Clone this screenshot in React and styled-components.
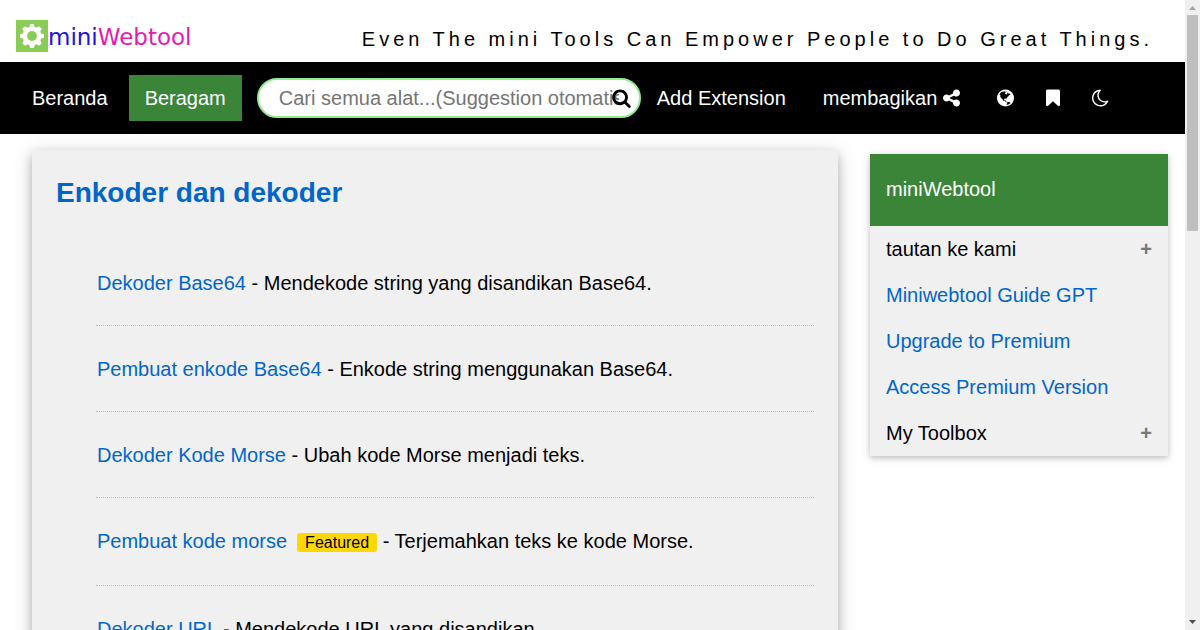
import styled, { createGlobalStyle } from "styled-components";

/* ── icons ── */
const icons = {
  search: {
    left: 64,
    units: 1664,
    width: 19,
    d: "M1216 832q0-185-131.5-316.5t-316.5-131.5-316.5 131.5-131.5 316.5 131.5 316.5 316.5 131.5 316.5-131.5 131.5-316.5zm512 832q0 52-38 90t-90 38q-54 0-90-38l-343-342q-179 124-399 124-143 0-273.5-55.5t-225-150-150-225-55.5-273.5 55.5-273.5 150-225 225-150 273.5-55.5 273.5 55.5 225 150 150 225 55.5 273.5q0 220-124 399l343 343q37 37 37 90z",
  },
  share: {
    left: 128,
    units: 1536,
    width: 17,
    d: "M1344 1024q133 0 226.5 93.5t93.5 226.5-93.5 226.5-226.5 93.5-226.5-93.5-93.5-226.5q0-12 2-34l-360-180q-92 86-218 86-133 0-226.5-93.5t-93.5-226.5 93.5-226.5 226.5-93.5q126 0 218 86l360-180q-2-22-2-34 0-133 93.5-226.5t226.5-93.5 226.5 93.5 93.5 226.5-93.5 226.5-226.5 93.5q-126 0-218-86l-360 180q2 22 2 34t-2 34l360 180q92-86 218-86z",
  },
  bookmark: {
    left: 256,
    units: 1280,
    width: 14,
    d: "M1420 128q23 0 44 9 33 13 52.5 41t19.5 62v1289q0 34-19.5 62t-52.5 41q-19 8-44 8-48 0-83-32l-441-424-441 424q-36 33-83 33-23 0-44-9-33-13-52.5-41t-19.5-62v-1289q0-34 19.5-62t52.5-41q21-9 44-9h1048z",
  },
  moon: {
    left: 128,
    units: 1536,
    width: 17,
    d: "M1390 1303q-54 9-110 9-182 0-337-90t-245-245-90-337q0-192 104-357-201 60-328.5 229t-127.5 384q0 130 51 248.5t136.5 204 204 136.5 248.5 51q144 0 273.5-61.5t220.5-171.5zm203-85q-94 203-283.5 324.5t-413.5 121.5q-156 0-298-61t-245-164-164-245-61-298q0-153 57.5-292.5t156-241.5 235.5-164.5 290-68.5q44-2 61 39 18 41-15 72-86 78-131.5 181.5t-45.5 218.5q0 148 73 273t198 198 273 73q118 0 228-51 41-18 72 13 14 14 17.5 34t-4.5 38z",
  },
  globe: {
    left: 128,
    units: 1536,
    width: 17,
    d: "M896 128q209 0 385.5 103t279.5 279.5 103 385.5-103 385.5-279.5 279.5-385.5 103-385.5-103-279.5-279.5-103-385.5 103-385.5 279.5-279.5 385.5-103zm274 521q-2 1-9.5 9.5t-13.5 9.5q2 0 4.5-5t5-11 3.5-7q6-7 22-15 14-6 52-12 34-8 51 11-2-2 9.5-13t14.5-12q3-2 15-4.5t15-7.5l2-22q-12 1-17.5-7t-6.5-21q0 2-6 8 0-7-4.5-8t-11.5 1-9 1q-10-3-15-7.5t-8-16.5-4-15q-2-5-9.5-11t-9.5-10q-1-2-2.5-5.5t-3-6.5-4-5.5-5.5-2.5-7 5-7.5 10-4.5 5q-3-2-6-1.5t-4.5 1-4.5 3-5 3.5q-3 2-8.5 3t-8.5 2q15-5-1-11-10-4-16-3 9-4 7.5-12t-8.5-14h5q-1-4-8.5-8.5t-17.5-8.5-13-6q-8-5-34-9.5t-33-.5q-5 6-4.5 10.5t4 14 3.5 12.5q1 6-5.5 13t-6.5 12q0 7 14 15.5t10 21.5q-3 8-16 16t-16 12q-5 8-1.5 18.5t10.5 16.5q2 2 1.5 4t-3.5 4.5-5.5 4-6.5 3.5l-3 2q-11 5-20.5-6t-13.5-26q-7-25-16-30-23-8-29 1-5-13-41-26-25-9-58-4 6-1 0-15-7-15-19-12 3-6 4-17.5t1-13.5q3-13 12-23 1-1 7-8.5t9.5-13.5.5-6q35 4 50-11 5-5 11.5-17t10.5-17q9-6 14-5.5t14.5 5.5 14.5 5q14 1 15.5-11t-7.5-20q12 1 3-17-4-7-8-9-12-4-27 5-8 4 2 8-1-1-9.5 10.5t-16.5 17.5-16-5q-1-1-5.5-13.5t-9.5-13.5q-8 0-16 15 3-8-11-15t-24-8q19-12-8-27-7-4-20.5-5t-19.5 4q-5 7-5.5 11.5t5 8 10.5 5.5 11.5 4 8.5 3q14 10 8 14-2 1-8.5 3.5t-11.5 4.5-6 4q-3 4 0 14t-2 14q-5-5-9-17.5t-7-16.5q7 9-25 6l-10-1q-4 0-16 2t-20.5 1-13.5-8q-4-8 0-20 1-4 4-2-4-3-11-9.5t-10-8.5q-46 15-94 41 6 1 12-1 5-2 13-6.5t10-5.5q34-14 42-7l5-5q14 16 20 25-7-4-30-1-20 6-22 12 7 12 5 18-4-3-11.5-10t-14.5-11-15-5q-16 0-22 1-146 80-235 222 7 7 12 8 4 1 5 9t2.5 11 11.5-3q9 8 3 19 1-1 44 27 19 17 21 21 3 11-10 18-1-2-9-9t-9-4q-3 5 .5 18.5t10.5 12.5q-7 0-9.5 16t-2.5 35.5-1 23.5l2 1q-3 12 5.5 34.5t21.5 19.5q-13 3 20 43 6 8 8 9 3 2 12 7.5t15 10 10 10.5q4 5 10 22.5t14 23.5q-2 6 9.5 20t10.5 23q-1 0-2.5 1t-2.5 1q3 7 15.5 14t15.5 13q1 3 2 10t3 11 8 2q2-20-24-62-15-25-17-29-3-5-5.5-15.5t-4.5-14.5q2 0 6 1.5t8.5 3.5 7.5 4 2 3q-3 7 2 17.5t12 18.5 17 19 12 13q6 6 14 19.5t0 13.5q9 0 20 10.5t17 19.5q5 8 8 26t5 24q2 7 8.5 13.5t12.5 9.5l16 8 13 7q5 2 18.5 10.5t21.5 11.5q10 4 16 4t14.5-2.5 13.5-3.5q15-2 29 15t21 21q36 19 55 11-2 1 .5 7.5t8 15.5 9 14.5 5.5 8.5q5 6 18 15t18 15q6-4 7-9-3 8 7 20t18 10q14-3 14-32-31 15-49-18 0-1-2.5-5.5t-4-8.5-2.5-8.5 0-7.5 5-3q9 0 10-3.5t-2-12.5-4-13q-1-8-11-20t-12-15q-5 9-16 8t-16-9q0 1-1.5 5.5t-1.5 6.5q-13 0-15-1 1-3 2.5-17.5t3.5-22.5q1-4 5.5-12t7.5-14.5 4-12.5-4.5-9.5-17.5-2.5q-19 1-26 20-1 3-3 10.5t-5 11.5-9 7q-7 3-24 2t-24-5q-13-8-22.5-29t-9.5-37q0-10 2.5-26.5t3-25-5.5-24.5q3-2 9-9.5t10-10.5q2-1 4.5-1.5t4.5 0 4-1.5 3-6q-1-1-4-3-3-3-4-3 7 3 28.5-1.5t27.5 1.5q15 11 22-2 0-1-2.5-9.5t-.5-13.5q5 27 29 9 3 3 15.5 5t17.5 5q3 2 7 5.5t5.5 4.5 5-.5 8.5-6.5q10 14 12 24 11 40 19 44 7 3 11 2t4.5-9.5 0-14-1.5-12.5l-1-8v-18l-1-8q-15-3-18.5-12t1.5-18.5 15-18.5q1-1 8-3.5t15.5-6.5 12.5-8q21-19 15-35 7 0 11-9-1 0-5-3t-7.5-5-4.5-2q9-5 2-16 5-3 7.5-11t7.5-10q9 12 21 2 7-8 1-16 5-7 20.5-10.5t18.5-9.5q7 2 8-2t1-12 3-12q4-5 15-9t13-5l17-11q3-4 0-4 18 2 31-11 10-11-6-20 3-6-3-9.5t-15-5.5q3-1 11.5-.5t10.5-1.5q15-10-7-16-17-5-43 12zm-163 877q206-36 351-189-3-3-12.5-4.5t-12.5-3.5q-18-7-24-8 1-7-2.5-13t-8-9-12.5-8-11-7q-2-2-7-6t-7-5.5-7.5-4.5-8.5-2-10 1l-3 1q-3 1-5.5 2.5t-5.5 3-4 3 0 2.5q-21-17-36-22-5-1-11-5.5t-10.5-7-10-1.5-11.5 7q-5 5-6 15t-2 13q-7-5 0-17.5t2-18.5q-3-6-10.5-4.5t-12 4.5-11.5 8.5-9 6.5-8.5 5.5-8.5 7.5q-3 4-6 12t-5 11q-2-4-11.5-6.5t-9.5-5.5q2 10 4 35t5 38q7 31-12 48-27 25-29 40-4 22 12 26 0 7-8 20.5t-7 21.5q0 6 2 16z",
  },
};

function Icon({ name }) {
  const { left, units, width, d } = icons[name];
  return (
    <IconSvg width={width} height="20" viewBox={`${left} 0 ${units} 1792`} aria-hidden="true">
      <path d={d} />
    </IconSvg>
  );
}

const teeth = [0, 45, 90, 135, 180, 225, 270, 315];

function LogoMark() {
  return (
    <svg width="32" height="32" viewBox="0 0 32 32" aria-hidden="true">
      <rect width="32" height="32" fill="#8c5" />
      <circle cx="16" cy="16" r="7.2" fill="none" stroke="#fff" strokeWidth="4.6" />
      {teeth.map((deg) => (
        <path
          key={deg}
          d="M13 8.2L14 4.600Q14.200 4 15 4H17Q17.800 4 18 4.600L19 8.200Z"
          fill="#fff"
          transform={`rotate(${deg} 16 16)`}
        />
      ))}
    </svg>
  );
}

/* ── data ── */
const tools = [
  { name: "Dekoder Base64", text: "Mendekode string yang disandikan Base64." },
  { name: "Pembuat enkode Base64", text: "Enkode string menggunakan Base64." },
  { name: "Dekoder Kode Morse", text: "Ubah kode Morse menjadi teks." },
  { name: "Pembuat kode morse", text: "Terjemahkan teks ke kode Morse.", featured: true },
  { name: "Dekoder URL", text: "Mendekode URL yang disandikan." },
];

/* ── Header ── */
function Header() {
  return (
    <Top>
      <Logo href="#" aria-label="miniWebtool">
        <LogoMark />
        <LogoText>
          mini<LogoAccent>Webtool</LogoAccent>
        </LogoText>
      </Logo>
      <Slogan>Even The mini Tools Can Empower People to Do Great Things.</Slogan>
    </Top>
  );
}

/* ── NavBar ── */
function NavBar() {
  return (
    <Nav>
      <NavLink href="#">Beranda</NavLink>
      <NavLink href="#" $active>
        Beragam
      </NavLink>
      <SearchForm onSubmit={(e) => e.preventDefault()}>
        <SearchInput
          type="text"
          aria-label="Cari semua alat"
          placeholder="Cari semua alat...(Suggestion otomatis)"
        />
        <SearchButton type="submit" aria-label="Cari">
          <Icon name="search" />
        </SearchButton>
      </SearchForm>
      <NavLink href="#">Add Extension</NavLink>
      <ShareButton type="button">
        membagikan <Icon name="share" />
      </ShareButton>
      <NavButton type="button" aria-label="Bahasa">
        <Icon name="globe" />
      </NavButton>
      <NavButton type="button" aria-label="Bookmark">
        <Icon name="bookmark" />
      </NavButton>
      <NavButton type="button" aria-label="Mode gelap">
        <Icon name="moon" />
      </NavButton>
    </Nav>
  );
}

/* ── ToolPanel ── */
function ToolPanel() {
  return (
    <Panel>
      <PanelTitle>
        <Link href="#">Enkoder dan dekoder</Link>
      </PanelTitle>
      <ToolList>
        {tools.map((tool) => (
          <ToolItem key={tool.name}>
            <Link href="#">{tool.name}</Link>
            {tool.featured && <Badge>Featured</Badge>} - {tool.text}
          </ToolItem>
        ))}
      </ToolList>
    </Panel>
  );
}

/* ── SideMenu ── */
function SideMenu() {
  return (
    <Side>
      <SideTitle>miniWebtool</SideTitle>
      <SideButton type="button">
        tautan ke kami <Plus>+</Plus>
      </SideButton>
      <SideLink href="#">Miniwebtool Guide GPT</SideLink>
      <SideLink href="#">Upgrade to Premium</SideLink>
      <SideLink href="#">Access Premium Version</SideLink>
      <SideButton type="button">
        My Toolbox <Plus>+</Plus>
      </SideButton>
    </Side>
  );
}

/* ── ScrollBar ── */
function ScrollBar() {
  return (
    <Track aria-hidden="true">
      <Arrow viewBox="0 0 15 15">
        <path d="M4 10L7.500 6L11 10Z" fill="#a3a3a3" />
      </Arrow>
      <Thumb />
      <Arrow viewBox="0 0 15 15">
        <path d="M4 5L7.500 9L11 5Z" fill="#505050" />
      </Arrow>
    </Track>
  );
}

export default function App() {
  return (
    <Frame>
      <GlobalStyle />
      <Page>
        <Header />
        <NavBar />
        <Main>
          <ToolPanel />
          <SideMenu />
        </Main>
      </Page>
      <ScrollBar />
    </Frame>
  );
}

/* ── styled ── */
const GlobalStyle = createGlobalStyle`
  * {
    box-sizing: border-box;
  }

  body {
    margin: 0;
    background: #fff;
    color: #000;
    font-family: "Liberation Sans", Arial, sans-serif;
    font-size: 20px;
    line-height: 30px;
  }

  button,
  input {
    font: inherit;
  }
`;

const Frame = styled.div`
  display: grid;
  grid-template-columns: minmax(0, 1fr) 15px;
  height: 100vh;
  overflow: hidden;
`;

const Page = styled.div`
  overflow: hidden;
`;

const IconSvg = styled.svg`
  fill: currentColor;
  flex: none;
`;

const Top = styled.header`
  display: flex;
  justify-content: space-between;
  align-items: center;
  height: 62px;
  padding: 10px 32px 0 16px;
`;

const Logo = styled.a`
  display: flex;
  align-items: center;
  text-decoration: none;
`;

const LogoText = styled.span`
  padding-top: 2px;
  font-family: "DejaVu Sans", sans-serif;
  font-size: 23px;
  color: #21d;
`;

const LogoAccent = styled.span`
  color: #e81ab0;
`;

const Slogan = styled.p`
  margin: 0;
  padding-top: 6px;
  letter-spacing: 4px;
  white-space: nowrap;
`;

const Nav = styled.nav`
  display: flex;
  align-items: center;
  height: 72px;
  padding: 0 16px;
  background: #000;
`;

const NavLink = styled.a`
  padding: 8px 16px;
  margin-right: ${(p) => (p.$active ? "15px" : "5px")};
  background: ${(p) => (p.$active ? "#3b8539" : "transparent")};
  color: #fff;
  text-decoration: none;
  white-space: nowrap;
`;

const SearchForm = styled.form`
  position: relative;
  width: 384px;
`;

const SearchInput = styled.input`
  display: block;
  width: 100%;
  height: 40px;
  padding: 0 20px;
  border: 2px solid #90ee90;
  border-radius: 20px;
  background: #fff;
  outline: none;

  &::placeholder {
    color: #757575;
  }
`;

const SearchButton = styled.button`
  position: absolute;
  top: 10px;
  right: 10px;
  display: flex;
  padding: 0;
  border: 0;
  background: none;
  color: #000;
`;

const NavButton = styled.button`
  display: flex;
  align-items: center;
  gap: 6px;
  padding: 8px 16px;
  border: 0;
  background: none;
  color: #fff;
  white-space: nowrap;
`;

const ShareButton = styled(NavButton)`
  margin-right: 5px;
`;

const Main = styled.main`
  display: grid;
  grid-template-columns: minmax(0, 1fr) 298px;
  align-items: start;
  gap: 32px;
  padding: 16px 17px 0 32px;
`;

const Link = styled.a`
  color: #06c;
  text-decoration: none;
`;

const Panel = styled.section`
  padding: 24px 24px 40px;
  border-radius: 4px;
  background: #f0f0f0;
  box-shadow: 0 4px 10px rgba(0, 0, 0, 0.2), 0 4px 20px rgba(0, 0, 0, 0.19);
`;

const PanelTitle = styled.h1`
  margin: 0 0 28px;
  font-size: 28px;
  line-height: 38px;
`;

const ToolList = styled.ul`
  margin: 0;
  padding: 0 0 0 40px;
  list-style: none;
`;

const ToolItem = styled.li`
  padding: 28px 1px 27px;
  border-bottom: 1px dotted #bbb;
`;

const Badge = styled.span`
  margin-left: 10px;
  padding: 1px 8px;
  border-radius: 3px;
  background: gold;
  font-size: 16px;
  vertical-align: middle;
`;

const Side = styled.aside`
  margin-top: 4px;
  background: #f0f0f0;
  box-shadow: 0 2px 5px rgba(0, 0, 0, 0.16), 0 2px 10px rgba(0, 0, 0, 0.12);
`;

const SideTitle = styled.div`
  padding: 20px 16px 22px;
  background: #3b8539;
  color: #fff;
`;

const SideLink = styled(Link)`
  display: block;
  padding: 8px 16px;
`;

const SideButton = styled.button`
  display: flex;
  justify-content: space-between;
  width: 100%;
  padding: 8px 16px;
  border: 0;
  background: none;
  color: #000;
`;

const Plus = styled.span`
  color: #777;
  font-weight: bold;
`;

const Track = styled.div`
  display: grid;
  grid-template-rows: 15px 1fr 15px;
  background: #f0f0f0;
`;

const Arrow = styled.svg`
  width: 15px;
  height: 15px;
`;

const Thumb = styled.div`
  width: 11px;
  height: 36%;
  margin: 0 2px;
  background: #bfbfbf;
`;
